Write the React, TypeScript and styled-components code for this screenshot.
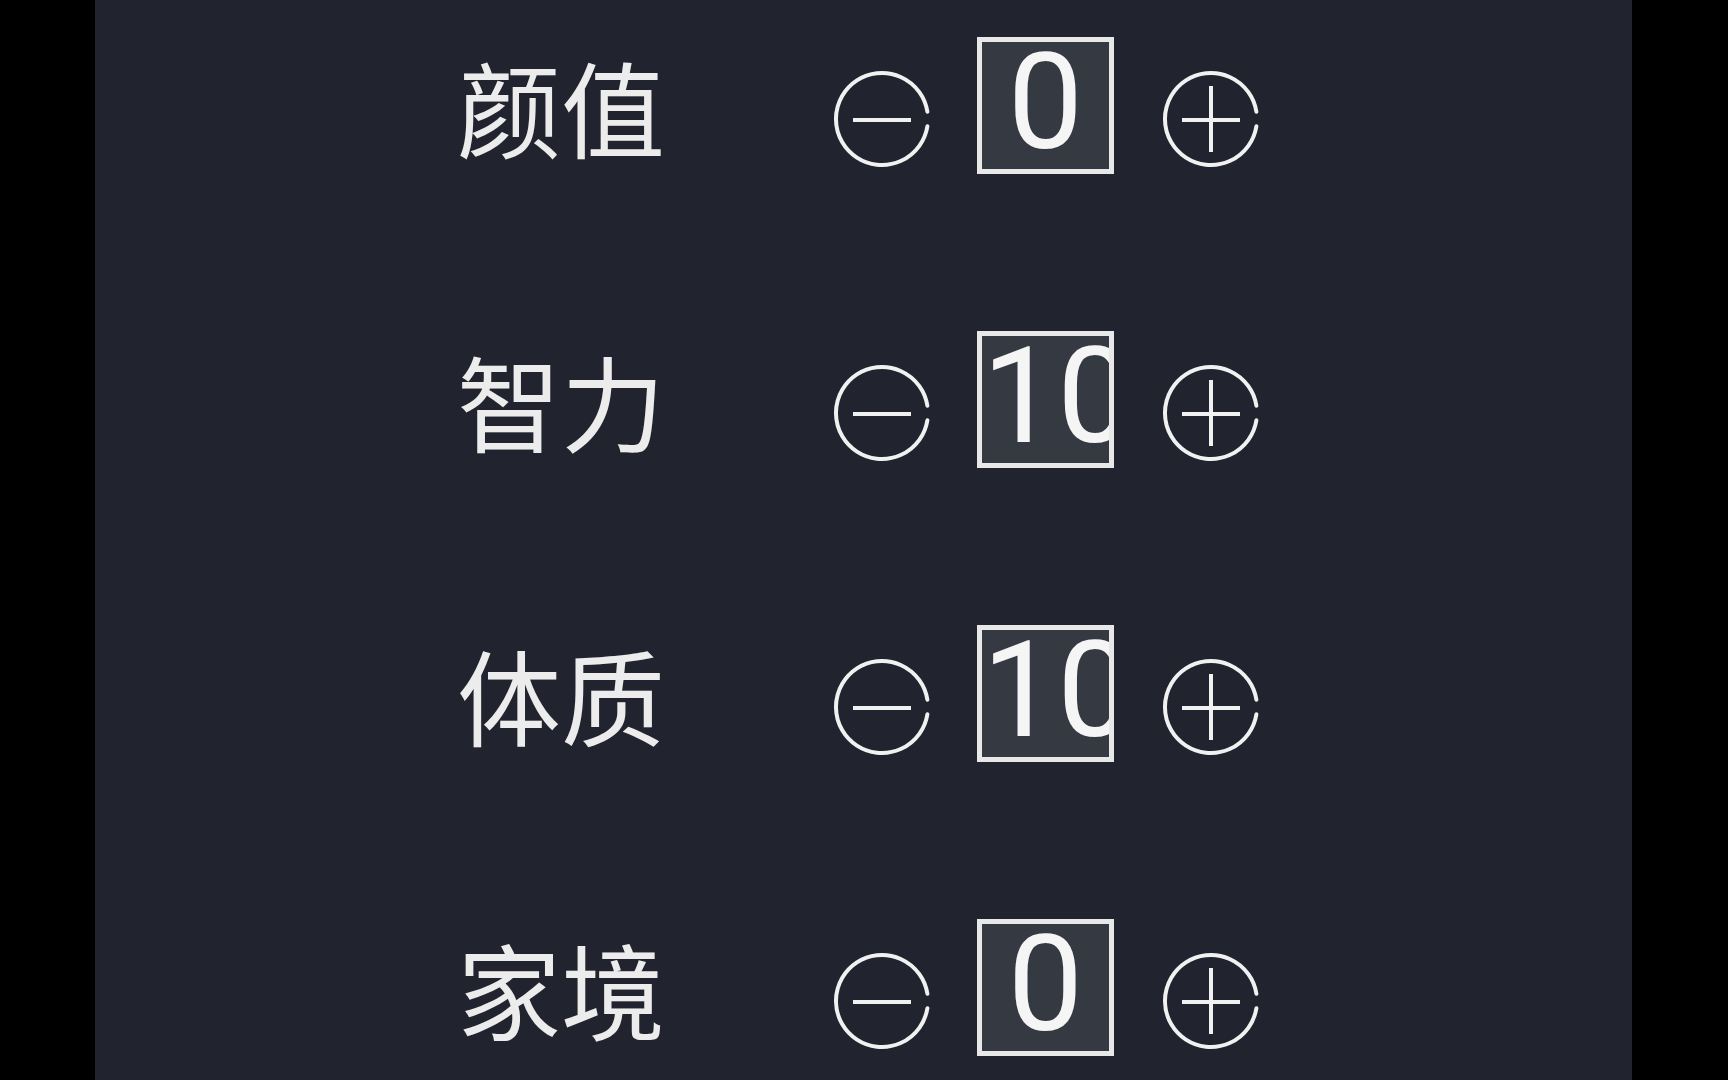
import { createGlobalStyle } from 'styled-components'
import styled from 'styled-components'

type Attr = { name: string; value: number }

const attrs: Attr[] = [
  { name: '颜值', value: 0 },
  { name: '智力', value: 10 },
  { name: '体质', value: 10 },
  { name: '家境', value: 0 },
]

const GlobalStyle = createGlobalStyle`
  html, body {
    margin: 0;
    padding: 0;
    background: #000;
    overflow: hidden;
  }
`

const CircleIcon = ({ plus }: { plus?: boolean }) => (
  <svg width="100" height="100" viewBox="0 0 100 100" fill="none">
    <path
      d="M95.4 42.8 A46 46 0 1 0 95.4 57.2"
      stroke="#f1f1f1"
      strokeWidth="4"
      strokeLinecap="round"
    />
    <path d="M21 51 H79" stroke="#f1f1f1" strokeWidth="4.2" />
    {plus && <path d="M50 17 V83" stroke="#f1f1f1" strokeWidth="4" />}
  </svg>
)

export default function App() {
  return (
    <>
      <GlobalStyle />
      <Screen>
        <Panel>
          {attrs.map((a) => (
            <Row key={a.name}>
              <Label>{a.name}</Label>
              <StepButton type="button" aria-label="minus">
                <CircleIcon />
              </StepButton>
              <ValueBox>{a.value}</ValueBox>
              <StepButton type="button" aria-label="plus" $plus>
                <CircleIcon plus />
              </StepButton>
            </Row>
          ))}
        </Panel>
      </Screen>
    </>
  )
}

const Screen = styled.div`
  width: 1728px;
  height: 1080px;
  background: #000;
  display: flex;
  justify-content: flex-start;
`

const Panel = styled.div`
  margin-left: 95px;
  width: 1537px;
  height: 1080px;
  background: #21242e;
  display: flex;
  flex-direction: column;
  gap: 157px;
  padding: 37px 0 0 362px;
  box-sizing: border-box;
`

const Row = styled.div`
  display: flex;
  align-items: center;
  height: 137px;
`

const Label = styled.div`
  width: 208px;
  font-family: 'Noto Sans CJK SC', 'Noto Sans', sans-serif;
  font-size: 104px;
  line-height: 1;
  color: #ececec;
  margin-top: 1px;
  white-space: nowrap;
`

const StepButton = styled.button<{ $plus?: boolean }>`
  width: 100px;
  height: 100px;
  padding: 0;
  border: none;
  background: none;
  display: flex;
  margin-top: 26px;
  margin-left: ${({ $plus }) => ($plus ? '47px' : '167px')};
  margin-right: ${({ $plus }) => ($plus ? '0' : '45px')};
  cursor: pointer;
  svg {
    display: block;
  }
`

const ValueBox = styled.div`
  width: 137px;
  height: 137px;
  box-sizing: border-box;
  border: 5px solid #e8e8e8;
  background: #353a42;
  color: #f5f5f5;
  font-family: Roboto, 'Liberation Sans', sans-serif;
  font-size: 134px;
  line-height: 122px;
  text-align: center;
  white-space: nowrap;
  overflow: hidden;
`
